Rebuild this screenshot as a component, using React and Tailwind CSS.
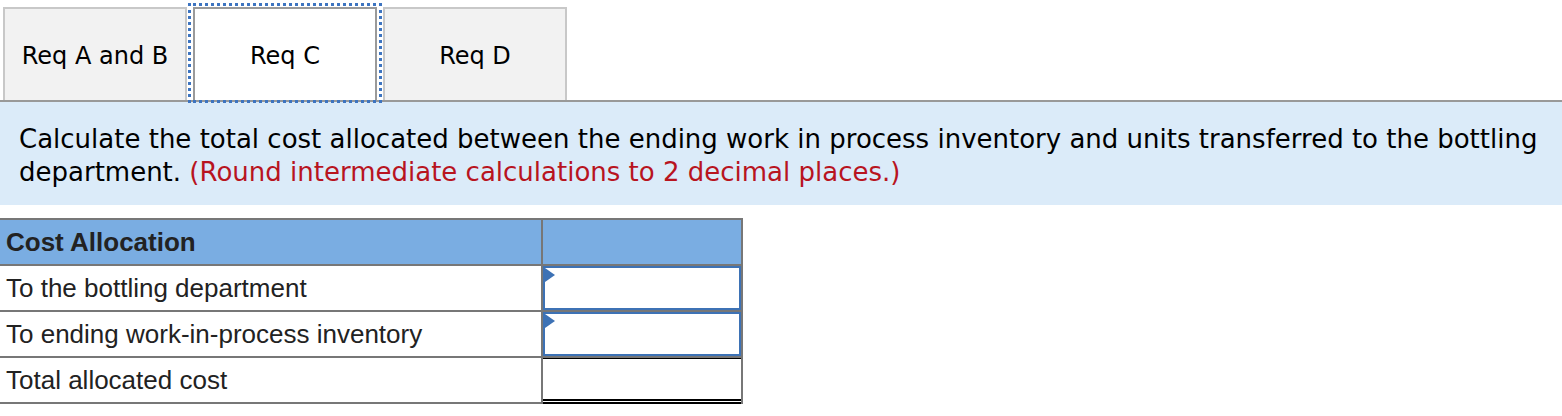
import { useState } from "react";

const tabs = ["Req A and B", "Req C", "Req D"];

const rows = [
  { label: "To the bottling department", input: true },
  { label: "To ending work-in-process inventory", input: true },
  { label: "Total allocated cost", total: true },
];

export default function App() {
  const [active, setActive] = useState(1);

  return (
    <div className="w-[1562px] h-[416px] bg-white overflow-hidden">
      {/* Tabs */}
      <div className="flex gap-[1px] h-[100px] pl-[3px] pt-[3px] font-['DejaVu_Sans',sans-serif] text-[24px] text-black">
        {tabs.map((t, i) =>
          i === active ? (
            <button
              key={t}
              type="button"
              onClick={() => setActive(i)}
              className="relative z-10 w-[194px] h-[100px] border-[3px] border-dotted border-[#3d74c0] px-[2px] pt-[1px]"
            >
              <div className="h-full bg-white border-x-2 border-t-2 border-[#9a9a9a] flex items-center justify-center pt-[3px]">
                {t}
              </div>
            </button>
          ) : (
            <button
              key={t}
              type="button"
              onClick={() => setActive(i)}
              className="mt-[4px] w-[184px] h-[93px] bg-[#f2f2f2] border-x-2 border-t-2 border-[#c8c8c8] flex items-center justify-center pt-[3px]"
            >
              {t}
            </button>
          )
        )}
      </div>

      {/* Instructions */}
      <div className="border-t-2 border-[#999]">
        <p className="bg-[#dbebf9] h-[103px] pl-[19px] pr-[8px] pt-[21px] font-['DejaVu_Sans',sans-serif] text-[26px] leading-[33px] text-black">
          Calculate the total cost allocated between the ending work in process inventory and units transferred to the bottling
          department.{" "}
          <span className="text-[#b8141f]">(Round intermediate calculations to 2 decimal places.)</span>
        </p>
      </div>

      {/* Table */}
      <div className="mt-[13px] w-[743px] border-t-2 border-[#777] font-['Liberation_Sans',Arial,sans-serif] text-[26px] text-[#222]">
        <div className="flex h-[46px]">
          <div className="w-[543px] bg-[#7aade2] border-r-2 border-b-2 border-[#777] px-[6px] flex items-center font-bold">
            Cost Allocation
          </div>
          <div className="w-[200px] bg-[#7aade2] border-r-2 border-b-2 border-[#777]" />
        </div>

        {rows.map((r) => (
          <div key={r.label} className="flex h-[46px]">
            <div className="w-[543px] border-r-2 border-b-2 border-[#777] px-[6px] flex items-center">
              {r.label}
            </div>
            {r.input ? (
              <div className="w-[200px] border-r-2 border-b-2 border-[#777]">
                <div className="relative h-full border-2 border-[#3d72b5] bg-white">
                  <svg
                    className="absolute left-0 top-0"
                    width="10"
                    height="14"
                    viewBox="0 0 10 14"
                  >
                    <path d="M0 0 L10 7 L0 14 Z" fill="#3d72b5" />
                  </svg>
                  <input
                    className="w-full h-full bg-transparent outline-none px-[10px] text-right"
                    aria-label={r.label}
                  />
                </div>
              </div>
            ) : (
              <div className="w-[200px] border-r-2 border-[#777]">
                <div className="h-full border-t border-black border-b-[5px] border-double border-b-black" />
              </div>
            )}
          </div>
        ))}
      </div>
    </div>
  );
}
